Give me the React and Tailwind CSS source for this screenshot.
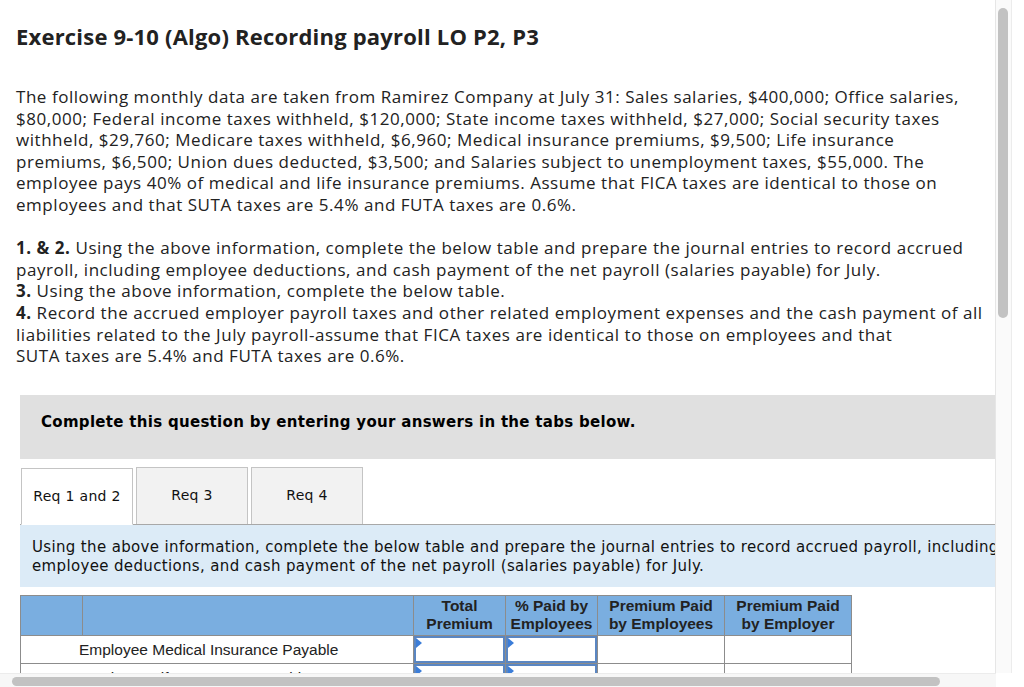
import React from "react";

const body = { fontFamily: "'Open Sans', Lato, sans-serif" };
const verdana = { fontFamily: "'DejaVu Sans', Verdana, sans-serif" };
const arial = { fontFamily: "'Liberation Sans', Arial, sans-serif" };

const InputCell = () => (
  <td className="border border-[#8c8c8c] p-0 h-full">
    <div className="relative h-[27px] border-2 border-[#5a86c2] bg-white">
      <span className="absolute left-0 top-0 w-0 h-0 border-t-[5px] border-b-[5px] border-l-[6px] border-t-transparent border-b-transparent border-l-[#3b7dd8]" />
    </div>
  </td>
);

const App = () => {
  const tabs = ["Req 1 and 2", "Req 3", "Req 4"];
  return (
    <div className="w-[1024px] h-[687px] bg-white flex overflow-hidden text-[#222]">
      <div className="w-[996px] flex flex-col">
        <div className="h-[673px] overflow-hidden border-r border-[#e6e6e6]">
          <div className="w-[1200px]">
            <div className="pl-4 pt-[22px] text-[#222]" style={body}>
              <h1 className="text-[22px] leading-7 font-bold tracking-[0.2px]">
                Exercise 9-10 (Algo) Recording payroll LO P2, P3
              </h1>
              <p className="mt-[36px] text-[17px] leading-[21.6px] tracking-[0.54px]">
                The following monthly data are taken from Ramirez Company at July 31: Sales salaries, $400,000; Office salaries,<br />
                $80,000; Federal income taxes withheld, $120,000; State income taxes withheld, $27,000; Social security taxes<br />
                withheld, $29,760; Medicare taxes withheld, $6,960; Medical insurance premiums, $9,500; Life insurance<br />
                premiums, $6,500; Union dues deducted, $3,500; and Salaries subject to unemployment taxes, $55,000. The<br />
                employee pays 40% of medical and life insurance premiums. Assume that FICA taxes are identical to those on<br />
                employees and that SUTA taxes are 5.4% and FUTA taxes are 0.6%.
              </p>
              <p className="mt-[21.6px] text-[17px] leading-[21.6px] tracking-[0.54px]">
                <b>1. &amp; 2.</b> Using the above information, complete the below table and prepare the journal entries to record accrued<br />
                payroll, including employee deductions, and cash payment of the net payroll (salaries payable) for July.<br />
                <b>3.</b> Using the above information, complete the below table.<br />
                <b>4.</b> Record the accrued employer payroll taxes and other related employment expenses and the cash payment of all<br />
                liabilities related to the July payroll-assume that FICA taxes are identical to those on employees and that<br />
                SUTA taxes are 5.4% and FUTA taxes are 0.6%.
              </p>
            </div>

            <div className="ml-5 w-[975px] mt-[28px]">
              <div className="h-16 bg-[#e0e0e0] pl-[21px] pt-[16px] text-[15px] font-bold text-black tracking-[0.3px]" style={verdana}>
                Complete this question by entering your answers in the tabs below.
              </div>

              <div className="mt-2 flex items-end gap-[3px] pl-px" style={verdana}>
                {tabs.map((t, i) => (
                  <div
                    key={t}
                    className={`h-[57px] w-[112px] flex items-center justify-center text-[14px] tracking-[0.3px] text-[#111] border border-[#c4c4c4] ${
                      i === 0 ? "bg-white border-b-white relative z-10 -mb-px" : "bg-[#f2f2f2] border-b-0"
                    }`}
                  >
                    {t}
                  </div>
                ))}
              </div>

              <div className="border-t border-[#a8a8a8] bg-[#dcebf7] h-[63px] pl-3 pt-[13px] text-[15px] leading-[19px] tracking-[0.35px] text-[#111] whitespace-nowrap" style={verdana}>
                Using the above information, complete the below table and prepare the journal entries to record accrued payroll, including<br />
                employee deductions, and cash payment of the net payroll (salaries payable) for July.
              </div>

              <table className="mt-2 border-collapse w-[832px] text-[#222]" style={arial}>
                <thead>
                  <tr className="bg-[#7aaee0] h-[40px] text-[15.5px] leading-[18px] font-bold">
                    <th className="border border-[#8c8c8c] w-[62px]" />
                    <th className="border border-[#8c8c8c] w-[331px]" />
                    <th className="border border-[#8c8c8c] w-[92px]">Total<br />Premium</th>
                    <th className="border border-[#8c8c8c] w-[92px]">% Paid by<br />Employees</th>
                    <th className="border border-[#8c8c8c] w-[127px]">Premium Paid<br />by Employees</th>
                    <th className="border border-[#8c8c8c] w-[127px]">Premium Paid<br />by Employer</th>
                  </tr>
                </thead>
                <tbody className="text-[15.5px]">
                  <tr className="h-[28px]">
                    <td colSpan={2} className="border border-[#8c8c8c] pl-[58px]">Employee Medical Insurance Payable</td>
                    <InputCell />
                    <InputCell />
                    <td className="border border-[#8c8c8c]" />
                    <td className="border border-[#8c8c8c]" />
                  </tr>
                  <tr className="h-[28px]">
                    <td colSpan={2} className="border border-[#8c8c8c] pl-[58px]">Employee Life Insurance Payable</td>
                    <InputCell />
                    <InputCell />
                    <td className="border border-[#8c8c8c]" />
                    <td className="border border-[#8c8c8c]" />
                  </tr>
                </tbody>
              </table>
            </div>
          </div>
        </div>
        <div className="h-[14px] bg-[#f7f7f7] border-t border-[#ececec] pl-3 pt-[3px]">
          <div className="h-[9px] w-[928px] rounded-full bg-[#c2c2c2]" />
        </div>
      </div>
      <div className="w-[16px] h-[673px] bg-[#fafafa] border-r border-[#ececec] pt-2 pl-[2px]">
        <div className="w-[10px] h-[310px] rounded-full bg-[#c2c2c2]" />
      </div>
    </div>
  );
};

export default App;
